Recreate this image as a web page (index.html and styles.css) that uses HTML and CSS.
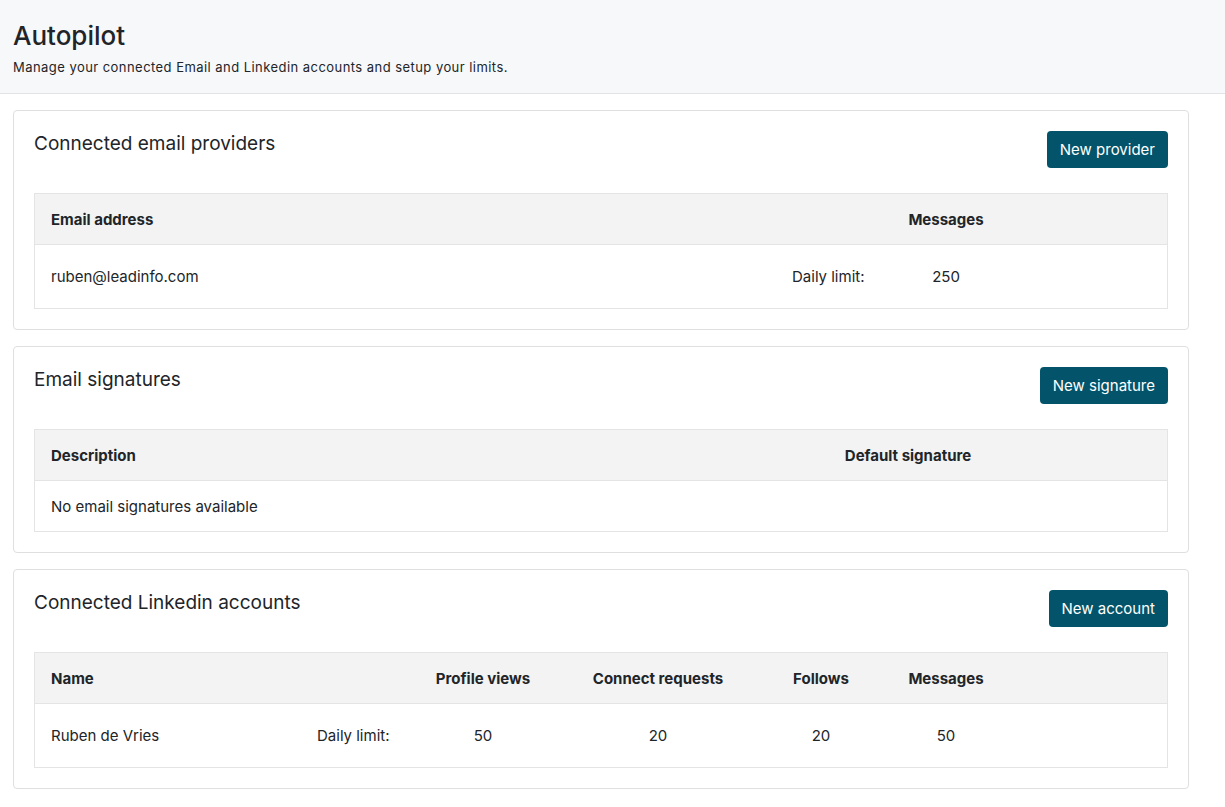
FILE: index.html
```html
<!DOCTYPE html>
<html lang="en">
<head>
    <meta charset="UTF-8">
    <title>Autopilot</title>
    <link rel="stylesheet" href="styles.css">
</head>
<body>
    <header class="page-header">
        <h1>Autopilot</h1>
        <p>Manage your connected Email and Linkedin accounts and setup your limits.</p>
    </header>

    <main class="content">
        <section class="card">
            <div class="card-header">
                <h2>Connected email providers</h2>
                <button class="btn">New provider</button>
            </div>
            <div class="table">
                <div class="table-head cols-email">
                    <div class="cell">Email address</div>
                    <div class="cell"></div>
                    <div class="cell center">Messages</div>
                    <div class="cell"></div>
                </div>
                <div class="table-row tall cols-email">
                    <div class="cell">ruben@leadinfo.com</div>
                    <div class="cell">Daily limit:</div>
                    <div class="cell center">250</div>
                    <div class="cell"></div>
                </div>
            </div>
        </section>

        <section class="card">
            <div class="card-header">
                <h2>Email signatures</h2>
                <button class="btn">New signature</button>
            </div>
            <div class="table">
                <div class="table-head cols-signature">
                    <div class="cell">Description</div>
                    <div class="cell center">Default signature</div>
                    <div class="cell"></div>
                </div>
                <div class="table-row">
                    <div class="cell">No email signatures available</div>
                </div>
            </div>
        </section>

        <section class="card">
            <div class="card-header">
                <h2>Connected Linkedin accounts</h2>
                <button class="btn">New account</button>
            </div>
            <div class="table">
                <div class="table-head cols-linkedin">
                    <div class="cell">Name</div>
                    <div class="cell"></div>
                    <div class="cell center">Profile views</div>
                    <div class="cell center">Connect requests</div>
                    <div class="cell center">Follows</div>
                    <div class="cell center">Messages</div>
                    <div class="cell"></div>
                </div>
                <div class="table-row tall cols-linkedin">
                    <div class="cell">Ruben de Vries</div>
                    <div class="cell">Daily limit:</div>
                    <div class="cell center">50</div>
                    <div class="cell center">20</div>
                    <div class="cell center">20</div>
                    <div class="cell center">50</div>
                    <div class="cell"></div>
                </div>
            </div>
        </section>
    </main>
</body>
</html>
```

FILE: styles.css
```css
body {
    margin: 0;
    font-family: Inter, "Noto Sans", sans-serif;
    color: #212529;
    background-color: #fff;
}
.page-header {
    background-color: #f7f8fa;
    border-bottom: 1px solid #e1e3e6;
    padding: 20px 13px 17px;
}
.page-header h1 {
    margin: 0;
    font-size: 26px;
    font-weight: 500;
    line-height: 32px;
}
.page-header p {
    margin: 6px 0 0;
    font-size: 13px;
    line-height: 18px;
    letter-spacing: 0.45px;
}
.content {
    display: flex;
    flex-direction: column;
    gap: 16px;
    padding: 16px 36px 16px 13px;
}
.card {
    border: 1px solid #dfdfdf;
    border-radius: 4px;
    padding: 20px;
}
.card-header {
    display: flex;
    justify-content: space-between;
    align-items: flex-start;
    margin-bottom: 25px;
}
.card-header h2 {
    margin: 0;
    font-size: 19px;
    font-weight: 400;
    line-height: 25px;
}
.btn {
    height: 37px;
    padding: 0 13px;
    border: none;
    border-radius: 4px;
    background-color: #03546a;
    color: #fff;
    font-family: inherit;
    font-size: 15px;
}
.table {
    border: 1px solid #e4e4e4;
    font-size: 15px;
}
.table-head {
    display: grid;
    height: 50px;
    background-color: #f3f3f3;
    border-bottom: 1px solid #e4e4e4;
    font-weight: 700;
}
.table-row {
    display: grid;
    height: 50px;
}
.table-row.tall { height: 63px; }
.cols-email { grid-template-columns: 741px 100px 140px 1fr; }
.cols-signature { grid-template-columns: 790px 166px 1fr; }
.cols-linkedin { grid-template-columns: 266px 115px 134px 216px 110px 140px 1fr; }
.cell {
    display: flex;
    align-items: center;
    padding: 0 16px;
    white-space: nowrap;
}
.cell.center { justify-content: center; }
```
